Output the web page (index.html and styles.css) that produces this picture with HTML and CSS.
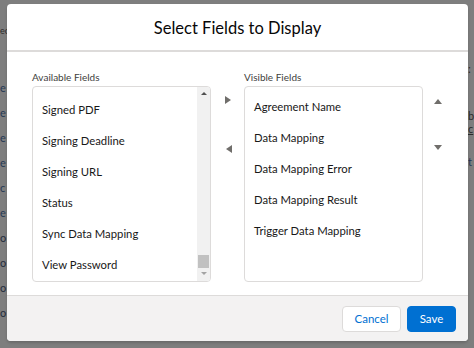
FILE: index.html
```html
<!DOCTYPE html>
<html>
<head>
<meta charset="utf-8">
<link rel="stylesheet" href="styles.css">
</head>
<body>
<div class="page">
  <div class="bg-col bg-left">
    <span class="bg-t t1">ec</span>
    <span class="bg-t">e</span>
    <span class="bg-t">e</span>
    <span class="bg-t">e</span>
    <span class="bg-t">e</span>
    <span class="bg-t">c</span>
    <span class="bg-t">e</span>
    <span class="bg-t t3">o</span>
    <span class="bg-t t3">o</span>
    <span class="bg-t t3">o</span>
    <span class="bg-t t3">o</span>
  </div>
  <div class="bg-col bg-right">
    <span class="bg-r r1">:</span>
    <span class="bg-r r2">b</span>
    <span class="bg-r r3">c</span>
    <span class="bg-r r4">t</span>
  </div>
</div>
<div class="overlay">
  <div class="modal">
    <header class="modal-header">
      <h2 class="modal-title">Select Fields to Display</h2>
    </header>
    <section class="modal-body">
      <div class="dual">
        <div class="label">Available Fields</div>
        <div></div>
        <div class="label">Visible Fields</div>
        <div></div>

        <div class="listbox listbox-scroll">
          <ul class="options options-scrolled">
            <li>Signed PDF</li>
            <li>Signing Deadline</li>
            <li>Signing URL</li>
            <li>Status</li>
            <li>Sync Data Mapping</li>
            <li>View Password</li>
          </ul>
          <div class="scrollbar">
            <span class="sb-arrow sb-up"></span>
            <span class="sb-track"><span class="sb-thumb"></span></span>
            <span class="sb-arrow sb-down"></span>
          </div>
        </div>
        <div class="movers">
          <span class="tri tri-right"></span>
          <span class="tri tri-left"></span>
        </div>
        <div class="listbox">
          <ul class="options">
            <li>Agreement Name</li>
            <li>Data Mapping</li>
            <li>Data Mapping Error</li>
            <li>Data Mapping Result</li>
            <li>Trigger Data Mapping</li>
          </ul>
        </div>
        <div class="movers">
          <span class="tri tri-up"></span>
          <span class="tri tri-down"></span>
        </div>
      </div>
    </section>
    <footer class="modal-footer">
      <button class="btn btn-neutral">Cancel</button>
      <button class="btn btn-brand">Save</button>
    </footer>
  </div>
</div>
</body>
</html>
```

FILE: styles.css
```css
* { box-sizing: border-box; }
html, body {
  margin: 0;
  padding: 0;
  width: 474px;
  height: 348px;
  overflow: hidden;
  font-family: "Lato", "Noto Sans", sans-serif;
}
body { position: relative; background: #ffffff; }

.page {
  display: flex;
  justify-content: space-between;
  height: 348px;
}
.bg-col {
  display: flex;
  flex-direction: column;
  font-size: 11px;
  color: #1b5297;
}
.bg-left { padding-top: 24px; width: 8px; }
.bg-left .bg-t { height: 25px; line-height: 13px; }
.bg-left .t1 { color: #333; height: 57px; font-size: 9px; }
.bg-left .t3 { color: #16325c; }
.bg-right { width: 6px; padding-top: 62px; }
.bg-r { line-height: 13px; color: #333; }
.r1 { height: 47px; }
.r2 { height: 13px; }
.r3 { height: 33px; text-decoration: underline; }
.r4 { color: #1b5297; }

.overlay {
  position: absolute;
  inset: 0;
  background: rgba(40, 40, 40, 0.6);
  padding: 4px 6px 7px 7px;
}
.modal {
  width: 461px;
  height: 337px;
  background: #ffffff;
  border-radius: 4px;
  display: flex;
  flex-direction: column;
  overflow: hidden;
  box-shadow: 0 2px 3px rgba(0,0,0,0.16);
}
.modal-header {
  height: 48px;
  border-bottom: 2px solid #dddbda;
  display: flex;
  align-items: center;
  justify-content: center;
}
.modal-title {
  margin: 0;
  font-size: 16.5px;
  font-weight: 400;
  color: #080707;
  padding-top: 2px;
}
.modal-body {
  flex: 1;
  padding: 19px 0 0 25px;
}
.dual {
  display: grid;
  grid-template-columns: 179px 33px 179px 30px;
  grid-template-rows: 15px 196px;
}
.label {
  font-size: 10px;
  color: #3e3e3c;
  line-height: 13px;
}
.listbox {
  border: 1px solid #dddbda;
  border-radius: 4px;
  background: #fff;
  display: flex;
  overflow: hidden;
}
.options {
  list-style: none;
  margin: 0;
  padding: 4px 0 0 9px;
  flex: 1;
}
.options-scrolled { padding-top: 7px; }
.options li {
  height: 31px;
  line-height: 31px;
  font-size: 11.3px;
  color: #181818;
  white-space: nowrap;
}
.scrollbar {
  width: 13px;
  background: #f1f1f1;
  display: flex;
  flex-direction: column;
  align-items: center;
}
.sb-arrow {
  width: 0; height: 0;
  border-left: 3px solid transparent;
  border-right: 3px solid transparent;
}
.sb-up { border-bottom: 3px solid #505050; margin: 5px 0 9px; }
.sb-down { border-top: 3px solid #a3a3a3; margin: 4px 0 6px; }
.sb-track {
  flex: 1;
  width: 100%;
  display: flex;
  flex-direction: column;
  justify-content: flex-end;
  align-items: center;
}
.sb-thumb {
  width: 11px;
  height: 13px;
  background: #c1c1c1;
}
.movers {
  display: flex;
  flex-direction: column;
  align-items: center;
  padding-top: 10px;
  gap: 41px;
}
.tri { width: 0; height: 0; display: block; }
.tri-right {
  border-top: 4px solid transparent;
  border-bottom: 4px solid transparent;
  border-left: 6px solid #706e6b;
  margin-left: 1px;
}
.tri-left {
  border-top: 4px solid transparent;
  border-bottom: 4px solid transparent;
  border-right: 6px solid #706e6b;
  margin-left: 2px;
}
.tri-up {
  border-left: 4px solid transparent;
  border-right: 4px solid transparent;
  border-bottom: 5px solid #706e6b;
  margin-top: 3px;
}
.tri-down {
  border-left: 4px solid transparent;
  border-right: 4px solid transparent;
  border-top: 5px solid #706e6b;
  margin-top: 0;
}
.modal-footer {
  height: 46px;
  background: #f3f2f2;
  border-top: 1px solid #dddbda;
  display: flex;
  justify-content: flex-end;
  align-items: center;
  gap: 6px;
  padding: 0 12px 0 0;
}
.btn {
  height: 26px;
  border-radius: 4px;
  font-family: inherit;
  font-size: 11.5px;
  padding: 0;
  line-height: 24px;
}
.btn-neutral {
  width: 59px;
  background: #fff;
  border: 1px solid #dddbda;
  color: #0070d2;
}
.btn-brand {
  width: 49px;
  background: #0070d2;
  border: 1px solid #0070d2;
  color: #fff;
}
```
